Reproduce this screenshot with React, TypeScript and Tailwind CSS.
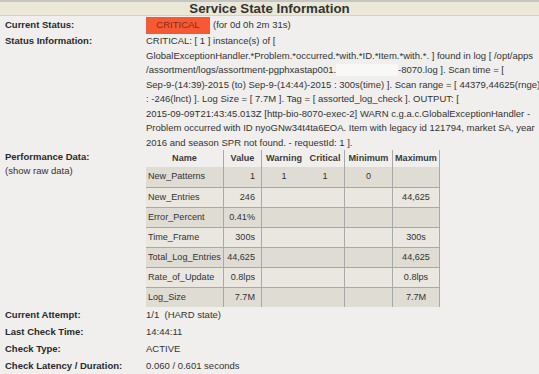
const statusLines: React.ReactNode[] = [
  'CRITICAL: [ 1 ] instance(s) of [',
  'GlobalExceptionHandler.*Problem.*occurred.*with.*ID.*Item.*with.*. ] found in log [ /opt/apps',
  <>
    /assortment/logs/assortment-pgphxastap001.
    <span className="inline-block h-[12px] w-[62px] bg-[#f8f8f7] align-middle" />
    -8070.log ]. Scan time = [
  </>,
  'Sep-9-(14:39)-2015 (to) Sep-9-(14:44)-2015 : 300s(time) ]. Scan range = [ 44379,44625(rnge)',
  ': -246(lnct) ]. Log Size = [ 7.7M ]. Tag = [ assorted_log_check ]. OUTPUT: [',
  '2015-09-09T21:43:45.013Z [http-bio-8070-exec-2] WARN c.g.a.c.GlobalExceptionHandler -',
  'Problem occurred with ID nyoGNw34t4ta6EOA. Item with legacy id 121794, market SA, year',
  '2016 and season SPR not found. - requestId: 1 ].',
];

interface PerfRow {
  name: string;
  value: string;
  warn: string;
  crit: string;
  min: string;
  max: string;
}

const perfRows: PerfRow[] = [
  { name: 'New_Patterns', value: '1', warn: '1', crit: '1', min: '0', max: '' },
  { name: 'New_Entries', value: '246', warn: '', crit: '', min: '', max: '44,625' },
  { name: 'Error_Percent', value: '0.41%', warn: '', crit: '', min: '', max: '' },
  { name: 'Time_Frame', value: '300s', warn: '', crit: '', min: '', max: '300s' },
  { name: 'Total_Log_Entries', value: '44,625', warn: '', crit: '', min: '', max: '44,625' },
  { name: 'Rate_of_Update', value: '0.8lps', warn: '', crit: '', min: '', max: '0.8lps' },
  { name: 'Log_Size', value: '7.7M', warn: '', crit: '', min: '', max: '7.7M' },
];

const Label = ({ children }: { children: React.ReactNode }) => (
  <div className="w-[146px] shrink-0 pl-[5px] font-bold text-[#2a2a2a]">{children}</div>
);

const InfoRow = ({ label, value }: { label: string; value: string }) => (
  <div className="flex h-[17px] items-center">
    <Label>{label}</Label>
    <div className="whitespace-pre">{value}</div>
  </div>
);

export default function App() {
  return (
    <div className="min-h-screen bg-[#f0efed] font-['Liberation_Sans',Arial,sans-serif] text-[9.5px] text-[#333]">
      <div className="h-[16px] border-t-2 border-b border-t-[#c5c5c5] border-b-[#d5d2c2] bg-[#ebe8d8] text-center text-[13.3px] font-bold leading-[13px] text-[#333]">
        Service State Information
      </div>

      <div className="mt-[1px] flex h-[17px] items-center">
        <Label>Current Status:</Label>
        <div className="flex h-[17px] w-[64px] items-center justify-center bg-[#f65a34] text-[#8c2815]">
          CRITICAL
        </div>
        <div className="ml-[3px]">(for 0d 0h 2m 31s)</div>
      </div>

      <div className="flex leading-[14.5px]">
        <Label>Status Information:</Label>
        <div className="whitespace-nowrap">
          {statusLines.map((line, i) => (
            <div key={i}>{line}</div>
          ))}
        </div>
      </div>

      <div className="flex">
        <div className="w-[146px] shrink-0 pl-[5px] leading-[14px]">
          <div className="font-bold text-[#2a2a2a]">Performance Data:</div>
          <div>(show raw data)</div>
        </div>
        <div className="w-[294px] text-[9.1px]">
          <div className="flex h-[17px] items-center font-bold text-[#3a3a3a]">
            <div className="flex h-full w-[78px] items-center justify-center border-r border-[#a8a8a8]">Name</div>
            <div className="flex h-full w-[38px] items-center justify-center border-r border-[#a8a8a8]">Value</div>
            <div className="flex h-full w-[44px] items-center justify-center">Warning</div>
            <div className="flex h-full w-[39px] items-center justify-center border-r border-[#a8a8a8]">Critical</div>
            <div className="flex h-full w-[48px] items-center justify-center border-r border-[#a8a8a8]">Minimum</div>
            <div className="flex h-full w-[47px] items-center justify-center border-r border-[#a8a8a8]">Maximum</div>
          </div>
          {perfRows.map((r, i) => (
            <div
              key={r.name}
              className={`flex h-[20px] ${i > 0 ? 'border-t border-[#a8a8a8]' : ''} ${
                i % 2 === 0 ? 'bg-[#dfdcd3]' : 'bg-[#e9e7e0]'
              }`}
            >
              <div className="flex h-full w-[78px] items-center whitespace-nowrap border-r border-[#a8a8a8] pl-[2px]">{r.name}</div>
              <div className="flex h-full w-[38px] items-center justify-end border-r border-[#a8a8a8] pr-[6px]">{r.value}</div>
              <div className="flex h-full w-[44px] items-center justify-center">{r.warn}</div>
              <div className="flex h-full w-[39px] items-center justify-center border-r border-[#a8a8a8]">{r.crit}</div>
              <div className="flex h-full w-[48px] items-center justify-center border-r border-[#a8a8a8]">{r.min}</div>
              <div className="flex h-full w-[47px] items-center justify-center border-r border-[#a8a8a8]">{r.max}</div>
            </div>
          ))}
        </div>
      </div>

      <InfoRow label="Current Attempt:" value="1/1  (HARD state)" />
      <InfoRow label="Last Check Time:" value="14:44:11" />
      <InfoRow label="Check Type:" value="ACTIVE" />
      <InfoRow label="Check Latency / Duration:" value="0.060 / 0.601 seconds" />
    </div>
  );
}
